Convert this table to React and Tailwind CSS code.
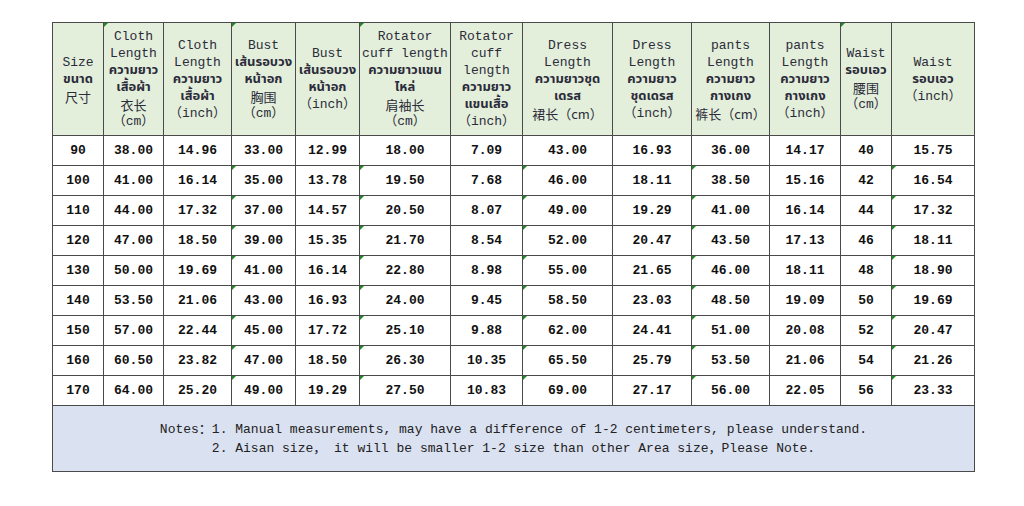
const COLS = [51, 60, 68, 64, 64, 91, 72, 90, 79, 78, 71, 51, 83];

const HEAD = [
  ["Size", "ขนาด", "尺寸"],
  ["Cloth", "Length", "ความยาว", "เสื้อผ้า", "衣长", "（cm）"],
  ["Cloth", "Length", "ความยาว", "เสื้อผ้า", "（inch）"],
  ["Bust", "เส้นรอบวง", "หน้าอก", "胸围", "（cm）"],
  ["Bust", "เส้นรอบวง", "หน้าอก", "（inch）"],
  ["Rotator", "cuff length", "ความยาวแขน", "ไหล่", "肩袖长", "（cm）"],
  ["Rotator", "cuff", "length", "ความยาว", "แขนเสื้อ", "（inch）"],
  ["Dress", "Length", "ความยาวชุด", "เดรส", "裙长（cm）"],
  ["Dress", "Length", "ความยาว", "ชุดเดรส", "（inch）"],
  ["pants", "Length", "ความยาว", "กางเกง", "裤长（cm）"],
  ["pants", "Length", "ความยาว", "กางเกง", "（inch）"],
  ["Waist", "รอบเอว", "腰围", "（cm）"],
  ["Waist", "รอบเอว", "（inch）"],
];

const ROWS = [
  ["90", "38.00", "14.96", "33.00", "12.99", "18.00", "7.09", "43.00", "16.93", "36.00", "14.17", "40", "15.75"],
  ["100", "41.00", "16.14", "35.00", "13.78", "19.50", "7.68", "46.00", "18.11", "38.50", "15.16", "42", "16.54"],
  ["110", "44.00", "17.32", "37.00", "14.57", "20.50", "8.07", "49.00", "19.29", "41.00", "16.14", "44", "17.32"],
  ["120", "47.00", "18.50", "39.00", "15.35", "21.70", "8.54", "52.00", "20.47", "43.50", "17.13", "46", "18.11"],
  ["130", "50.00", "19.69", "41.00", "16.14", "22.80", "8.98", "55.00", "21.65", "46.00", "18.11", "48", "18.90"],
  ["140", "53.50", "21.06", "43.00", "16.93", "24.00", "9.45", "58.50", "23.03", "48.50", "19.09", "50", "19.69"],
  ["150", "57.00", "22.44", "45.00", "17.72", "25.10", "9.88", "62.00", "24.41", "51.00", "20.08", "52", "20.47"],
  ["160", "60.50", "23.82", "47.00", "18.50", "26.30", "10.35", "65.50", "25.79", "53.50", "21.06", "54", "21.26"],
  ["170", "64.00", "25.20", "49.00", "19.29", "27.50", "10.83", "69.00", "27.17", "56.00", "22.05", "56", "23.33"],
];

// little green excel markers in the top-left corner of some cells
const HEAD_MARKS = [1, 3, 5, 11];
const ROW_MARKS = [3, 5, 7, 9, 12];

const isThai = (s) => /[\u0E00-\u0E7F]/.test(s);
const isCjk = (s) => /[\u4E00-\u9FFF]/.test(s);

function Mark() {
  return (
    <span className="absolute left-0 top-0 w-0 h-0 border-t-[4px] border-r-[4px] border-t-[#1f8a1f] border-r-transparent" />
  );
}

function HeadLine({ text }) {
  if (isThai(text)) {
    return <div className="font-bold text-[13px] [font-family:'Noto_Sans_Thai','Noto_Sans','DejaVu_Sans',sans-serif]">{text}</div>;
  }
  if (isCjk(text)) {
    return <div className="font-normal text-[13px] [font-family:'Noto_Sans_CJK_SC',sans-serif]">{text}</div>;
  }
  return <div>{text}</div>;
}

export default function App() {
  return (
    <div className="w-[1024px] h-[506px] bg-white pl-[52px] pt-[22px] [font-family:'Liberation_Mono','Noto_Sans_CJK_SC',monospace] text-[#1a1a1a]">
      <table className="border-collapse table-fixed w-[922px]">
        <colgroup>
          {COLS.map((w, i) => (
            <col key={i} style={{ width: w }} />
          ))}
        </colgroup>
        <thead>
          <tr className="h-[113px] bg-[#e3efda]">
            {HEAD.map((lines, i) => (
              <th
                key={i}
                className="relative border border-[#4a4a4a] p-0 align-middle text-center text-[13px] leading-[17px] font-normal whitespace-nowrap text-[#2b2b3a]"
              >
                {HEAD_MARKS.includes(i) && <Mark />}
                {lines.map((l, j) => (
                  <HeadLine key={j} text={l} />
                ))}
              </th>
            ))}
          </tr>
        </thead>
        <tbody>
          {ROWS.map((r, i) => (
            <tr key={i} className="h-[30px]">
              {r.map((v, j) => (
                <td
                  key={j}
                  className="relative border border-[#4a4a4a] p-0 text-center align-middle text-[13px] font-bold text-[#111]"
                >
                  {i > 0 && ROW_MARKS.includes(j) && <Mark />}
                  {v}
                </td>
              ))}
            </tr>
          ))}
          <tr className="h-[66px] bg-[#dae1f1]">
            <td
              colSpan={13}
              className="border border-[#4a4a4a] text-center align-middle text-[13px] leading-[19px] text-[#222] whitespace-pre"
            >
              <div>Notes：1. Manual measurements, may have a difference of 1-2 centimeters, please understand.</div>
              <div>2. Aisan size， it will be smaller 1-2 size than other Area size，Please Note.</div>
            </td>
          </tr>
        </tbody>
      </table>
    </div>
  );
}
